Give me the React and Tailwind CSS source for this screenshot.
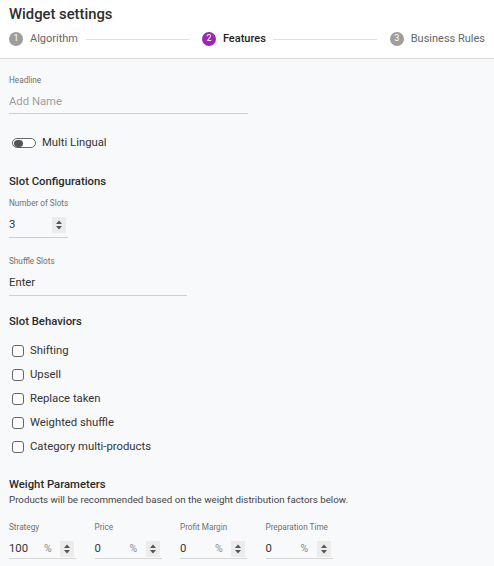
import React from "react";

const font = { fontFamily: "Roboto, 'Liberation Sans', sans-serif" };

function Spinner() {
  return (
    <span className="flex h-[16px] w-[14px] items-center justify-center bg-[#ececec]">
      <svg width="8" height="12" viewBox="0 0 8 12">
        <path d="M4 1.5 L7 5 L1 5 Z" fill="#555" />
        <path d="M4 10.5 L7 7 L1 7 Z" fill="#555" />
      </svg>
    </span>
  );
}

function Step({ n, label, active }) {
  return (
    <div className="flex shrink-0 items-center gap-[7px]">
      <span
        className={
          "flex h-[14px] w-[14px] items-center justify-center rounded-full text-[9px] text-white " +
          (active ? "bg-[#9c27b0]" : "bg-[#9e9e9e]")
        }
      >
        {n}
      </span>
      <span className={"text-[11px] " + (active ? "font-medium text-[#222]" : "text-[#666]")}>{label}</span>
    </div>
  );
}

function Label({ children, className = "" }) {
  return (
    <div className={"h-[12px] whitespace-nowrap text-[8.2px] leading-[12px] text-[#707070] " + className}>
      {children}
    </div>
  );
}

function Heading({ children, className = "" }) {
  return (
    <div className={"h-[16px] text-[11.3px] font-medium leading-[16px] text-[#2a2a2a] " + className}>
      {children}
    </div>
  );
}

function Check({ label }) {
  return (
    <label className="flex h-[24px] items-center gap-[6px] pl-[3px]">
      <span className="h-[12px] w-[12px] rounded-[3px] border-[1.5px] border-[#666] bg-white" />
      <span className="text-[11.3px] text-[#333]">{label}</span>
    </label>
  );
}

function PercentField({ label, value }) {
  return (
    <div className="flex flex-col">
      <Label>{label}</Label>
      <div className="mt-[8px] flex h-[18px] items-start border-b border-[#d6d6d6]">
        <div className="flex h-[16px] items-center">
          <span className="w-[35px] text-[11.3px] text-[#333]">{value}</span>
          <span className="w-[16px] text-[10.5px] text-[#8a8a8a]">%</span>
          <Spinner />
        </div>
      </div>
    </div>
  );
}

export default function App() {
  return (
    <div className="min-h-[566px] w-[494px] bg-[#f8f9fb]" style={font}>
      <div className="border-b border-[#d9d9d9] bg-white px-[9px] pb-[11px] pt-[4px]">
        <div className="h-[20px] text-[14.8px] font-medium leading-[20px] text-[#2e2e2e]">Widget settings</div>
        <div className="mt-[7px] flex h-[16px] items-center">
          <Step n="1" label="Algorithm" />
          <div className="ml-[8px] mr-[12px] h-px flex-1 bg-[#e0e0e0]" />
          <Step n="2" label="Features" active />
          <div className="ml-[7px] mr-[13px] h-px flex-1 bg-[#e0e0e0]" />
          <Step n="3" label="Business Rules" />
        </div>
      </div>

      <div className="px-[9px] pt-[15px]">
        <Label>Headline</Label>
        <div className="mt-[8px] w-[239px] border-b border-[#cfcfcf] pb-[3px] text-[11.3px] leading-[16px] text-[#9e9e9e]">
          Add Name
        </div>

        <div className="mt-[21px] flex h-[16px] items-center gap-[6px] pl-[3px]">
          <span className="relative h-[10px] w-[24px] rounded-full border border-[#666] bg-white">
            <span className="absolute left-[1px] top-[0.5px] h-[7px] w-[9px] rounded-full bg-[#555]" />
          </span>
          <span className="text-[11.3px] text-[#333]">Multi Lingual</span>
        </div>

        <Heading className="mt-[23px]">Slot Configurations</Heading>

        <Label className="mt-[7px]">Number of Slots</Label>
        <div className="mt-[8px] flex w-[59px] items-center justify-between border-b border-[#cfcfcf] pb-[4px] pr-[2px]">
          <span className="text-[11.3px] leading-[16px] text-[#333]">3</span>
          <Spinner />
        </div>

        <Label className="mt-[17px]">Shuffle Slots</Label>
        <div className="mt-[8px] w-[178px] border-b border-[#cfcfcf] pb-[4px] text-[11.3px] leading-[16px] text-[#333]">
          Enter
        </div>

        <Heading className="mt-[18px]">Slot Behaviors</Heading>

        <div className="mt-[9px] flex flex-col">
          <Check label="Shifting" />
          <Check label="Upsell" />
          <Check label="Replace taken" />
          <Check label="Weighted shuffle" />
          <Check label="Category multi-products" />
        </div>

        <Heading className="mt-[18px]">Weight Parameters</Heading>
        <div className="h-[14px] text-[9.75px] leading-[14px] text-[#444]">
          Products will be recommended based on the weight distribution factors below.
        </div>

        <div className="mt-[14px] grid grid-cols-[repeat(4,67px)] gap-x-[18.5px]">
          <PercentField label="Strategy" value="100" />
          <PercentField label="Price" value="0" />
          <PercentField label="Profit Margin" value="0" />
          <PercentField label="Preparation Time" value="0" />
        </div>
      </div>
    </div>
  );
}
